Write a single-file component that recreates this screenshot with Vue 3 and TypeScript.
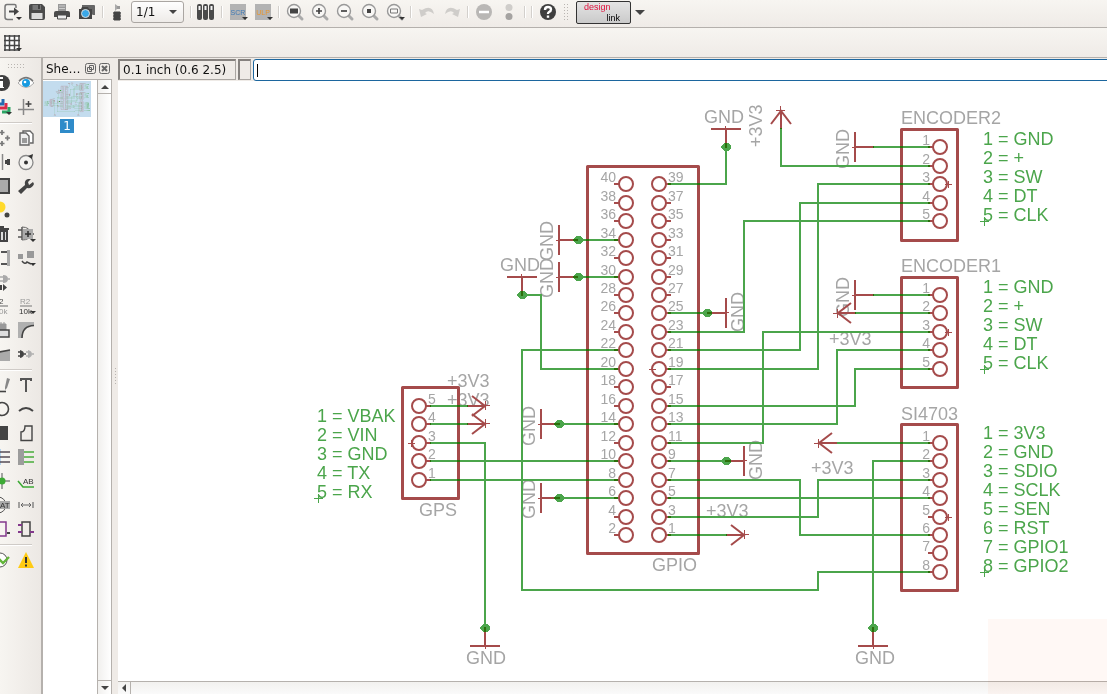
<script setup lang="ts">
import { ref } from 'vue'

type Dir = 'left' | 'right' | 'up' | 'down'
interface Tool { name: string; kind?: 'sep' | 'tool'; wide?: number; menu?: boolean }
interface Connector {
  title: string; titleX: number; titleY: number
  x: number; y: number; w: number; h: number
  pinX: number; side: 'left' | 'right'; pins: { n: number; y: number }[]
}

const command = ref('')
const sheet = ref('1/1')

const icons: Record<string, string> = {
  export: '<path d="M13 5V3Q13 1.500 11.500 1.500H4Q2 1.500 2 4V14Q2 16.500 4.500 16.500H10" fill="#f4f3f0" stroke="#777" stroke-width="1.500"/><path d="M6 7.500H11V4.500L16 8.500L11 12.500V9.500H6Z" fill="#444"/>',
  save: '<path d="M1 3Q1 1 3 1H14L17 4V15Q17 17 15 17H3Q1 17 1 15Z" fill="#4b4b4b"/><path d="M4.500 2H13V7H4.500Z" fill="#777"/><path d="M3.500 10H14.500V16H3.500Z" fill="#dcdcdc"/><path d="M10 2H12V6H10Z" fill="#444"/>',
  print: '<path d="M5 1H13V8H5Z" fill="#999"/><path d="M6 3H12M6 5.500H12" stroke="#ccc"/><path d="M1 10Q1 8 3 8H15Q17 8 17 10V14H1Z" fill="#4b4b4b"/><path d="M4.500 12H13.500V16H4.500Z" fill="#eee" stroke="#4b4b4b"/>',
  camera: '<path d="M4 5V2H16Q17 2 17 3V12H15" fill="#666"/><path d="M1 6H3L4 4H10L11 6H14V16H1Z" fill="#444"/><circle cx="7.500" cy="10.500" r="4" fill="#3aa8e8" stroke="#ddd"/>',
  chip: '<path d="M7 1L11 4L7 8Z" fill="#aaa"/><path d="M9 3H12V6H9Z" fill="#999"/><path d="M6 9H12V17H6ZM5 10H13M5 13H13M5 16H13" fill="#444" stroke="#444"/>',
  books: '<g fill="#4a4a4a"><rect x="0" y="1" width="5" height="16" rx="2"/><rect x="6" y="1" width="5" height="16" rx="2"/><rect x="12" y="1" width="5" height="16" rx="2"/></g><path d="M2.500 3V7M8.500 3V7M14.500 3V7" stroke="#f4f4f4" stroke-width="2"/>',
  scr: '<path d="M1 1H17V17H1Z" fill="#b3b3b3"/><text x="9" y="12" text-anchor="middle" font-family="Liberation Sans, sans-serif" font-size="7" fill="#3d78b4">SCR</text>',
  ulp: '<path d="M1 1H17V17H1Z" fill="#b3b3b3"/><text x="9" y="12" text-anchor="middle" font-family="Liberation Sans, sans-serif" font-size="7" fill="#e8962e">ULP</text>',
  grid: '<path d="M1 1H17V17H1Z" fill="#fff"/><path d="M2 1V17M6.500 1V17M11.500 1V17M16 1V17M1 2H17M1 6.500H17M1 11.500H17M1 16H17" stroke="#444" stroke-width="1.500"/>',
  undo: '<path d="M1 6L3 14L9 11L7 10Q10 6 16 11Q14 1 4 7Z" fill="#cfcdca"/>',
  redo: '<path d="M17 6L15 14L9 11L11 10Q8 6 2 11Q4 1 14 7Z" fill="#cfcdca"/>',
  stop: '<circle cx="9" cy="9" r="8" fill="#b9b7b5"/><path d="M4 9H14" stroke="#fff" stroke-width="2.500"/>',
  go: '<circle cx="9" cy="4.500" r="3.500" fill="#cfcdca"/><circle cx="9" cy="13.500" r="3.500" fill="#a5a3a1"/>',
  help: '<circle cx="9" cy="9" r="8" fill="#3f3f3f"/><path d="M6 7Q6 4 9 4Q12 4 12 6.500Q12 8 10 9Q9 9.500 9 11" fill="none" stroke="#fff" stroke-width="2.400"/><path d="M7.800 12.500H10.200V14.800H7.800Z" fill="#fff"/>',
  info: '<circle cx="9" cy="9" r="8" fill="#3f3f3f"/><path d="M7 3H10V5H7ZM6 7H10V13H11V14H6V13H7V8H6Z" fill="#fff"/>',
  eye: '<path d="M1 9Q9 -1 17 9Q9 18 1 9Z" fill="#fff" stroke="#aaa"/><path d="M2 7Q9 0 16 7" fill="none" stroke="#777" stroke-width="1.500"/><circle cx="9" cy="9" r="4" fill="#169ae0"/><circle cx="8" cy="8" r="1.300" fill="#fff"/>',
  layers: '<path d="M10 1V6H6" fill="none" stroke="#236bb0" stroke-width="3"/><path d="M13 5V10H7" fill="none" stroke="#d92b4a" stroke-width="3"/><path d="M16 9V14H9" fill="none" stroke="#2ca565" stroke-width="3"/>',
  mark: '<path d="M6.500 1V17M1 11.500H17" stroke="#888" stroke-width="1.500"/><path d="M11.500 3V9M8.500 6H14.500" stroke="#444" stroke-width="1.500"/>',
  move: '<path d="M9 1V6M6.500 3.500H11.500M9 12V17M6.500 14.500H11.500M14.500 6.500V11.500M12 9H17" stroke="#777" stroke-width="1.700"/>',
  copy: '<path d="M6 4V2H13L16 5V14H13" fill="#fff" stroke="#666" stroke-width="1.400"/><path d="M3 4H9L12 7V16H3Z" fill="#eee" stroke="#666" stroke-width="1.400"/><path d="M5 9H10V14H5Z" fill="#999"/>',
  mirror: '<path d="M9.500 1V17" stroke="#888" stroke-width="1.500"/><path d="M12 7H14V6H17V12H14V11H12Z" fill="#444"/>',
  rotate: '<circle cx="9" cy="9.500" r="7" fill="#f4f3f0" stroke="#888" stroke-width="1.300"/><circle cx="9" cy="9.500" r="2" fill="#333"/><path d="M11 3L16 1L15 6Z" fill="#333"/>',
  group: '<path d="M1 2H16V16H1Z" fill="#aaa" stroke="#444" stroke-width="2"/>',
  wrench: '<path d="M1 14L8 8Q7 3 11 2L14 2L11 5L12 8L16 5L17 7Q15 12 10 11L4 17Z" fill="#444"/>',
  paint: '<circle cx="7" cy="6" r="5.500" fill="#ffda2c"/><circle cx="14" cy="14" r="2.500" fill="#444"/>',
  trash: '<path d="M2 4H16M7 2H11" stroke="#444" stroke-width="2"/><path d="M4 6H14V16H4Z" fill="#ddd" stroke="#444" stroke-width="2"/><path d="M7 6V16M11 6V16" stroke="#444" stroke-width="2"/>',
  add: '<path d="M1 5H5M1 12H5M14 9H17M5 2V15" stroke="#555" stroke-width="1.500"/><path d="M5 2Q13 2 14 9Q13 15 5 15" fill="none" stroke="#666"/><path d="M6 4H16V14H6Z" fill="#aaa"/><path d="M11 6V12M8 9H14" stroke="#333" stroke-width="1.600"/>',
  pinswap: '<path d="M8 3H14M8 15H14" stroke="#555" stroke-width="2"/><path d="M14 1H17V17H14Z" fill="#aaa"/>',
  replace: '<path d="M1 5H6V10H1ZM10 2H17V9H10Z" fill="#999"/><path d="M5 12Q8 16 10 13L14 15" fill="none" stroke="#444" stroke-width="1.500"/>',
  gateswap: '<path d="M10 2Q15 2 15 6Q15 10 10 10Z" fill="#aaa"/><path d="M7 4H10M7 8H10M15 6H17" stroke="#aaa" stroke-width="1.500"/><path d="M7 12H9V17H7ZM10 11L14 14.500L10 18Z" fill="#444"/>',
  nameValue: '<text x="6" y="7" font-family="Liberation Sans, sans-serif" font-size="8" fill="#444">2</text><path d="M3 9H15" stroke="#666"/><text x="6" y="17" font-family="Liberation Sans, sans-serif" font-size="8" fill="#999">0k</text>',
  value: '<text x="3" y="7" font-family="Liberation Sans, sans-serif" font-size="8" fill="#999">R2</text><path d="M3 9H15" stroke="#777"/><text x="2" y="17" font-family="Liberation Sans, sans-serif" font-size="8" fill="#333">10k</text>',
  smash: '<path d="M4 3H13V12H4ZM5 1V4M8 1V4M11 1V4" fill="#999" stroke="#999"/><path d="M4 9H16V16H4" fill="#ddd" stroke="#444" stroke-width="1.500"/>',
  miter: '<path d="M1 1H17V4Q6 4 5 17H1Z" fill="#b0b0b0"/><path d="M5 17Q5 5 17 4.500" fill="none" stroke="#444" stroke-width="1.600"/>',
  split: '<path d="M1 8L17 5V16H1Z" fill="#aaa"/><path d="M1 8L17 5" stroke="#444" stroke-width="1.600"/>',
  invoke: '<path d="M3 5Q7 6 7 9Q7 12 3 13Z" fill="#444"/><path d="M1 7H4M1 11H4M7 9H9" stroke="#444" stroke-width="1.500"/><path d="M11 5Q15 6 15 9Q15 12 11 13Z" fill="#b0b0b0"/><path d="M9 7H12M9 11H12M15 9H17" stroke="#b0b0b0" stroke-width="1.500"/>',
  line: '<path d="M12 11L14 2L17 3L14 12L12 14Z" fill="#888"/><path d="M2 15.500H13" stroke="#444" stroke-width="1.600"/>',
  text: '<path d="M4 5V3H14V5M9 3V16" fill="none" stroke="#555" stroke-width="2"/>',
  circle: '<circle cx="9" cy="9" r="6.500" fill="none" stroke="#444" stroke-width="1.600"/>',
  arc: '<path d="M2 11Q9 5 16 11" fill="none" stroke="#444" stroke-width="2"/>',
  rect: '<path d="M1 2H15V16H1Z" fill="#444"/>',
  polygon: '<path d="M4 16.500V8Q8 8 8 2H15V16.500Z" fill="none" stroke="#444" stroke-width="1.400"/>',
  bus: '<path d="M4 1H8V17H4Z" fill="#b5d5f0"/><path d="M7 4H17M7 9H17M7 14H17" stroke="#554c55" stroke-width="1.600"/>',
  net: '<path d="M1 1H7V17H1Z" fill="#9c9c9c"/><path d="M7 4H17M7 9H17M7 14H17" stroke="#48ad3b" stroke-width="1.500"/>',
  junction: '<path d="M9 1V17M1 9H17" stroke="#888" stroke-width="1.500"/><circle cx="9" cy="9" r="3.500" fill="#3daa35"/>',
  label: '<path d="M1 9L6 15H17" fill="none" stroke="#3daa35" stroke-width="1.600"/><text x="6" y="12" font-family="Liberation Sans, sans-serif" font-size="8" fill="#333">AB</text>',
  attribute: '<circle cx="5" cy="9" r="8" fill="none" stroke="#555"/><path d="M6 5H17V13H6Z" fill="#aaa"/><text x="7" y="12" font-family="Liberation Sans, sans-serif" font-size="8" fill="#333">AT</text>',
  dimension: '<path d="M2 6V12M16 6V12" stroke="#777" stroke-width="1.300"/><path d="M4 9H14M6 7L4 9L6 11M12 7L14 9L12 11" fill="none" stroke="#666"/>',
  module: '<path d="M2 2H13V16H2Z" fill="none" stroke="#83388c" stroke-width="1.500"/><path d="M14 13H17" stroke="#444" stroke-width="2"/>',
  port: '<path d="M5 2H13V16H5Z" fill="none" stroke="#444" stroke-width="1.500"/><path d="M1 5H5M1 12H5M13 12H17" stroke="#83388c" stroke-width="2"/>',
  erc: '<circle cx="7" cy="9" r="7" fill="#fff" stroke="#555"/><path d="M6 8L10 12L16 6" fill="none" stroke="#62b53a" stroke-width="2.400"/>',
  warning: '<path d="M9 1L17 17H1Z" fill="#ffcb13"/><path d="M9 6V12" stroke="#333" stroke-width="2"/><path d="M8 13.500H10V15.500H8Z" fill="#333"/>',
}
const lens = (inner: string) =>
  '<path d="M12 12L16 16" stroke="#aaa" stroke-width="3" stroke-linecap="round"/><circle cx="8" cy="8" r="6.500" fill="#f8f7f5" stroke="#999" stroke-width="1.400"/>' + inner
icons.zoomFit = lens('<path d="M4 5.500H12V10.500H4Z" fill="#444"/>')
icons.zoomIn = lens('<path d="M5 8H11M8 5V11" stroke="#444" stroke-width="1.700"/>')
icons.zoomOut = lens('<path d="M5 8H11" stroke="#444" stroke-width="1.700"/>')
icons.redraw = lens('<path d="M6 6H10V10H6Z" fill="#444"/>')
icons.zoomSelect = lens('<path d="M4.500 6H11.500V10H4.500Z" fill="none" stroke="#777"/>')

const sep: Tool = { name: '', kind: 'sep' }
const fileTools: Tool[] = [
  { name: 'export', menu: true }, { name: 'save' }, { name: 'print' }, { name: 'camera' }, sep,
]
const mainTools: Tool[] = [
  sep, { name: 'books', wide: 24 }, sep, { name: 'scr', menu: true }, { name: 'ulp', menu: true }, sep,
  { name: 'zoomFit' }, { name: 'zoomIn' }, { name: 'zoomOut' }, { name: 'redraw' }, { name: 'zoomSelect', menu: true }, sep,
  { name: 'undo' }, { name: 'redo' }, sep, { name: 'stop' }, { name: 'go' }, sep, sep, { name: 'help' },
]
const palette: [string, string][][] = [
  [['info', 'eye'], ['layers', 'mark']],
  [['move', 'copy'], ['mirror', 'rotate'], ['group', 'wrench'], ['paint', ''], ['trash', 'add'], ['pinswap', 'replace'],
    ['gateswap', ''], ['nameValue', 'value'], ['smash', 'miter'], ['split', 'invoke']],
  [['line', 'text'], ['circle', 'arc'], ['rect', 'polygon'], ['bus', 'net'], ['junction', 'label'], ['attribute', 'dimension'], ['module', 'port']],
  [['erc', 'warning']],
]
const withMenu = ['layers', 'add', 'replace', 'value']

const rows = [184, 203, 221, 240, 258, 277, 295, 313, 332, 350, 369, 387, 406, 424, 443, 461, 480, 498, 517, 535]
const up = (ys: number[]) => ys.map((y, i) => ({ n: i + 1, y }))

const connectors: Connector[] = [
  { title: 'ENCODER2', titleX: 901, titleY: 124, x: 901, y: 129, w: 56, h: 111, pinX: 940, side: 'left', pins: up([147, 166, 184, 203, 221]) },
  { title: 'ENCODER1', titleX: 901, titleY: 272, x: 901, y: 277, w: 56, h: 110, pinX: 940, side: 'left', pins: up([295, 313, 332, 350, 369]) },
  { title: 'SI4703', titleX: 901, titleY: 420, x: 901, y: 424, w: 56, h: 166, pinX: 940, side: 'left', pins: up([443, 461, 480, 498, 517, 535, 553, 572]) },
  { title: 'GPS', titleX: 419, titleY: 516, x: 402, y: 387, w: 56, h: 111, pinX: 419, side: 'right', pins: up([480, 461, 443, 424, 406]) },
  { title: 'GPIO', titleX: 652, titleY: 571, x: 587, y: 166, w: 111, h: 387, pinX: 626, side: 'left', pins: rows.map((y, i) => ({ n: 40 - 2 * i, y })) },
  { title: '', titleX: 0, titleY: 0, x: 587, y: 166, w: 111, h: 387, pinX: 659, side: 'right', pins: rows.map((y, i) => ({ n: 39 - 2 * i, y })) },
]

const wires = [
  'M668 184H726V147', 'M578 240H618', 'M578 277H618', 'M522 295H541V369H618', 'M618 350H522V590H818V572H930',
  'M559 424H618', 'M559 498H618', 'M430 461H618', 'M430 480H618', 'M668 313H707', 'M668 332H744V221H930',
  'M668 350H800V203H930', 'M668 369H818V184H930', 'M668 406H855V369H930', 'M668 424H837V350H930',
  'M668 443H763V332H930', 'M668 461H726', 'M668 480H800V535H930', 'M668 498H930', 'M668 517H818V480H930',
  'M668 535H727', 'M873 147H930', 'M781 128V166H930', 'M873 295H930', 'M855 313H930', 'M837 443H930',
  'M930 461H873V628', 'M430 406H468', 'M430 424H468', 'M430 443H485V628',
].join('')

const junctions = [[726, 147], [578, 240], [578, 277], [522, 295], [559, 424], [559, 498], [707, 313], [726, 461], [873, 628], [485, 628]]
const junctionPath = junctions.map(([x, y]) => `M${x - 4} ${y - 2}l2 -2h4l3 3v2l-3 3h-4l-3 -3v-2z`).join('')

const grounds: [number, number, Dir][] = [
  [726, 129, 'down'], [559, 240, 'right'], [559, 277, 'right'], [522, 277, 'down'], [541, 424, 'right'], [541, 498, 'right'],
  [726, 313, 'left'], [744, 461, 'left'], [855, 147, 'right'], [855, 295, 'right'], [873, 646, 'up'], [485, 646, 'up'],
]
const supplies: [number, number, Dir][] = [
  [486, 406, 'left'], [486, 424, 'left'], [745, 535, 'left'], [837, 313, 'right'], [818, 443, 'right'], [781, 110, 'down'],
]
const turn: Record<Dir, number> = { right: 0, down: 90, left: 180, up: 270 }
const place = ([x, y, d]: [number, number, Dir]) => `translate(${x} ${y}) rotate(${turn[d]})`

const netNames: { t: string; x: number; y: number; r?: boolean }[] = [
  { t: 'GND', x: 704, y: 123 }, { t: 'GND', x: 500, y: 271 }, { t: 'GND', x: 466, y: 664 }, { t: 'GND', x: 855, y: 664 },
  { t: '+3V3', x: 447, y: 387 }, { t: '+3V3', x: 447, y: 406 }, { t: '+3V3', x: 706, y: 517 },
  { t: '+3V3', x: 829, y: 345 }, { t: '+3V3', x: 811, y: 474 },
  { t: '+3V3', x: 762, y: 147, r: true }, { t: 'GND', x: 849, y: 169, r: true }, { t: 'GND', x: 849, y: 317, r: true },
  { t: 'GND', x: 553, y: 261, r: true }, { t: 'GND', x: 553, y: 298, r: true }, { t: 'GND', x: 535, y: 446, r: true },
  { t: 'GND', x: 535, y: 519, r: true }, { t: 'GND', x: 744, y: 332, r: true }, { t: 'GND', x: 762, y: 480, r: true },
]
const origins = [[411, 443], [652, 369], [948, 184], [948, 332], [948, 517]]

const encoderPins = ['GND', '+', 'SW', 'DT', 'CLK']
const notes = [
  { x: 983, y: 145, pins: encoderPins },
  { x: 983, y: 293, pins: encoderPins },
  { x: 983, y: 439, pins: ['3V3', 'GND', 'SDIO', 'SCLK', 'SEN', 'RST', 'GPIO1', 'GPIO2'] },
  { x: 317, y: 422, pins: ['VBAK', 'VIN', 'GND', 'TX', 'RX'] },
]
</script>

<template>
  <div class="app">
    <header class="bar main-bar">
      <template v-for="(t, i) in fileTools" :key="i">
        <span v-if="t.kind === 'sep'" class="sep"></span>
        <button v-else class="tool" :aria-label="t.name">
          <svg class="icon" viewBox="0 0 18 18" v-html="icons[t.name]"></svg>
          <i v-if="t.menu" class="corner"></i>
        </button>
      </template>
      <button class="tool chip" aria-label="board">
        <svg class="icon" viewBox="0 0 18 18" v-html="icons.chip"></svg>
      </button>
      <div class="sheet-select">
        <select v-model="sheet" aria-label="Sheet"><option>1/1</option></select>
        <i class="arrow down"></i>
      </div>
      <template v-for="(t, i) in mainTools" :key="i">
        <span v-if="t.kind === 'sep'" class="sep"></span>
        <button v-else class="tool" :class="{ books: t.wide }" :aria-label="t.name">
          <svg class="icon" viewBox="0 0 18 18" v-html="icons[t.name]"></svg>
          <i v-if="t.menu" class="corner"></i>
        </button>
      </template>
      <span class="bar-grip"></span>
      <button class="design-link"><span class="design">design</span><span class="link">link</span></button>
      <button class="more" aria-label="more"><i class="arrow down"></i></button>
    </header>

    <div class="bar grid-bar">
      <button class="tool" aria-label="grid">
        <svg class="icon" viewBox="0 0 18 18" v-html="icons.grid"></svg>
        <i class="corner"></i>
      </button>
    </div>

    <div class="body">
      <nav class="palette">
        <span class="palette-grip"></span>
        <template v-for="(section, s) in palette" :key="s">
          <hr v-if="s" class="rule">
          <div class="section">
            <template v-for="(pair, p) in section" :key="p">
              <template v-for="(name, c) in pair" :key="c">
                <button v-if="name" class="cell" :aria-label="name">
                  <svg class="icon" viewBox="0 0 18 18" v-html="icons[name]"></svg>
                  <i v-if="withMenu.includes(name)" class="corner"></i>
                </button>
                <span v-else class="cell"></span>
              </template>
            </template>
          </div>
        </template>
      </nav>

      <aside class="sheets">
        <div class="sheets-head">
          <span class="sheets-title">She…</span>
          <button class="mini" aria-label="float">
            <svg viewBox="0 0 11 11"><rect x=".5" y=".5" width="10" height="10" rx="2" /><path d="M4.500 2.500H8.500V6.500H4.500ZM2.500 4.500H6.500V8.500H2.500Z" /></svg>
          </button>
          <button class="mini" aria-label="close">
            <svg viewBox="0 0 11 11"><rect x=".5" y=".5" width="10" height="10" rx="2" /><path d="M3 3L8 8M8 3L3 8" stroke-width="2" /></svg>
          </button>
        </div>
        <div class="sheets-body">
          <div class="sheet-list">
            <svg class="thumb" viewBox="300 80 774 600" preserveAspectRatio="xMidYMid meet">
              <use href="#schematic" />
            </svg>
            <span class="sheet-no">1</span>
          </div>
          <div class="vscroll">
            <button aria-label="scroll up"><i class="arrow up"></i></button>
            <span class="track"></span>
            <button aria-label="scroll down"><i class="arrow down"></i></button>
          </div>
        </div>
      </aside>

      <div class="splitter"><span></span></div>

      <main class="editor">
        <div class="params">
          <output class="coords">0.1 inch (0.6 2.5)</output>
          <span class="blank"></span>
          <div class="command">
            <span class="caret"></span>
            <input v-model="command" type="text" aria-label="Command">
          </div>
        </div>

        <div class="canvas">
          <svg class="drawing" role="img" aria-label="Schematic">
            <g transform="translate(-118 -81)">
              <g id="schematic">
                <g class="names">
                  <text v-for="(n, i) in netNames" :key="i" :transform="`translate(${n.x} ${n.y})` + (n.r ? ' rotate(-90)' : '')">{{ n.t }}</text>
                  <g v-for="(c, i) in connectors" :key="i">
                    <text v-if="c.title" :x="c.titleX" :y="c.titleY">{{ c.title }}</text>
                    <text
                      v-for="p in c.pins" :key="p.n" class="pin-no" :class="c.side"
                      :x="c.side === 'left' ? c.pinX - 10 : c.pinX + 9" :y="p.y - 2"
                    >{{ p.n }}</text>
                  </g>
                </g>
                <g id="symbols" class="symbols">
                  <g v-for="(c, i) in connectors" :key="i">
                    <rect v-if="c.title" class="box" :x="c.x + 0.5" :y="c.y + 0.5" :width="c.w" :height="c.h" />
                    <g v-for="p in c.pins" :key="p.n">
                      <circle :cx="c.pinX" :cy="p.y" r="7" />
                      <path :d="c.side === 'left' ? `M${c.pinX - 12} ${p.y}h5` : `M${c.pinX + 7} ${p.y}h5`" />
                    </g>
                  </g>
                  <g v-for="(g, i) in grounds" :key="i" :transform="place(g)">
                    <path d="M0 -15V15M0 0H19" />
                    <path class="hair" d="M-3 .5H4" />
                  </g>
                  <g v-for="(s, i) in supplies" :key="i" :transform="place(s)">
                    <path d="M0 0H19" />
                    <path class="slant" d="M14 -10L1 0L14 10" />
                    <path class="hair" d="M-4 .5H5M.5 -4V5" />
                  </g>
                  <path v-for="(o, i) in origins" :key="i" class="hair" :d="`M${o[0] - 3} ${o[1] + 0.5}h7M${o[0] + 0.5} ${o[1] - 3}v7`" />
                </g>
                <g class="wires">
                  <path :d="wires" />
                  <path class="junctions" :d="junctionPath" />
                  <g v-for="(n, i) in notes" :key="i">
                    <text v-for="(p, k) in n.pins" :key="k" :x="n.x" :y="n.y + k * 19">{{ k + 1 }} = {{ p }}</text>
                    <path class="hair" :d="`M${n.x - 3} ${n.y + (n.pins.length - 1) * 19 + 0.5}h9m-4.500 -4.500v9`" />
                  </g>
                </g>
                <mask id="on-symbols" class="alpha-mask" maskUnits="userSpaceOnUse" x="0" y="0" width="1200" height="800">
                  <use href="#symbols" />
                </mask>
                <g class="overlap" mask="url(#on-symbols)">
                  <path :d="wires" />
                  <path class="junctions" :d="junctionPath" />
                </g>
              </g>
            </g>
          </svg>
        </div>

        <div class="hscroll"><button aria-label="scroll left"><i class="arrow back"></i></button></div>
      </main>
    </div>
    <div class="tint"></div>
  </div>
</template>

<style>
body { margin: 0; overflow: hidden; }
</style>

<style scoped>
.app {
  position: relative;
  display: flex;
  flex-direction: column;
  height: 100vh;
  overflow: hidden;
  background: #efebe7;
  color: #111;
  font: 12px/16px "DejaVu Sans", sans-serif;
}
button { padding: 0; border: 0; background: none; font: inherit; color: inherit; }
.bar {
  display: flex;
  flex: none;
  align-items: center;
  box-sizing: border-box;
  background: linear-gradient(#f7f5f1, #efebe7);
  border-bottom: 1px solid #b4b0ac;
}
.main-bar { height: 28px; padding-bottom: 3px; }
.grid-bar { height: 30px; }
.tool {
  position: relative;
  display: flex;
  flex: none;
  align-items: center;
  justify-content: center;
  width: 25px;
  height: 24px;
}
.tool:first-child { margin-left: -1px; }
.chip { width: 22px; }
.books { width: 24px; }
.icon { display: block; width: 18px; height: 18px; overflow: visible; }
.corner {
  position: absolute;
  right: 2px;
  bottom: 4px;
  border: 3px solid transparent;
  border-top-color: #333;
  border-bottom: 0;
}
.sep { flex: none; width: 1px; height: 12px; margin: 0 3px; background: #d3d0cc; box-shadow: 1px 0 #fff; }
.sheet-select {
  position: relative;
  flex: none;
  box-sizing: border-box;
  width: 53px;
  height: 22px;
  margin: 0 3px;
  border: 1px solid #aaa6a2;
  border-radius: 3px;
  background: linear-gradient(#fefefe, #eeebe8);
}
.sheet-select select {
  display: block;
  width: 100%;
  height: 100%;
  padding: 0 0 0 4px;
  border: 0;
  background: none;
  appearance: none;
  font: inherit;
  color: inherit;
}
.sheet-select .arrow { position: absolute; right: 6px; top: 8px; pointer-events: none; }
.arrow { display: block; width: 0; height: 0; border: 4px solid transparent; }
.arrow.down { border-top-color: #444; border-bottom: 0; }
.arrow.up { border-bottom-color: #444; border-top: 0; }
.arrow.back { border-right-color: #444; border-left: 0; }
.bar-grip {
  flex: none;
  width: 5px;
  height: 18px;
  margin: 0 4px 0 3px;
  background: radial-gradient(circle, #b9b5b1 1px, transparent 1px) 0 0 / 3px 3px;
}
.design-link {
  display: flex;
  flex: none;
  flex-direction: column;
  box-sizing: border-box;
  width: 55px;
  height: 23px;
  margin-left: 4px;
  border: 1px solid #333;
  border-radius: 2px;
  background: linear-gradient(#e4e4e4, #cacaca);
  font: 9px/11px "Liberation Sans", sans-serif;
}
.design { align-self: flex-start; padding-left: 7px; color: #e0103c; }
.link { align-self: flex-end; padding-right: 10px; color: #000; }
.more { display: flex; justify-content: center; flex: none; width: 18px; }
.more .arrow { border-width: 5px 5px 0; }

.body { display: flex; flex: 1; min-height: 0; }
.palette {
  flex: none;
  box-sizing: border-box;
  width: 43px;
  overflow: hidden;
  border-right: 2px solid #b5b1ad;
  background: linear-gradient(90deg, #f7f5f1, #ece8e4);
}
.palette-grip {
  display: block;
  width: 17px;
  height: 6px;
  margin: 5px 0 2px 7px;
  background: radial-gradient(circle, #b9b5b1 1px, transparent 1px) 0 0 / 3px 3px;
}
.section { display: grid; grid-template-columns: 24px 24px; grid-auto-rows: 24px; margin-left: -10px; }
.cell { position: relative; display: flex; align-items: center; justify-content: center; }
.rule { height: 1px; margin: 3px 9px 3px 0; border: 0; background: #cfcbc7; box-shadow: 0 1px #fff; }

.sheets { display: flex; flex: none; flex-direction: column; width: 69px; }
.sheets-head { display: flex; flex: none; align-items: center; gap: 3px; height: 21px; padding-left: 3px; }
.sheets-title { flex: 1; white-space: nowrap; }
.mini { flex: none; width: 11px; height: 11px; }
.mini:last-child { margin-right: 2px; }
.mini svg { display: block; width: 11px; height: 11px; fill: none; stroke: #666; }
.sheets-body { display: flex; flex: 1; min-height: 0; background: #fff; border-top: 1px solid #b5b1ad; }
.sheet-list { display: flex; flex: 1; flex-direction: column; align-items: flex-start; gap: 2px; padding-top: 1px; }
.thumb { width: 48px; height: 36px; background: #c3dcee; }
.sheet-no { width: 14px; margin-left: 17px; background: #2f8bc9; color: #fff; line-height: 14px; text-align: center; }
.vscroll {
  display: flex;
  flex: none;
  flex-direction: column;
  width: 13px;
  border: solid #b5b1ad;
  border-width: 0 1px;
  background: linear-gradient(90deg, #f1f0ee, #fff);
}
.vscroll button { display: flex; align-items: center; justify-content: center; height: 13px; }
.track { flex: 1; border: solid #b5b1ad; border-width: 1px 0; }
.splitter { display: flex; flex: none; align-items: center; justify-content: center; width: 6px; }
.splitter span { width: 3px; height: 18px; background: radial-gradient(circle, #b9b5b1 1px, transparent 1px) 0 0 / 3px 3px; }

.editor { display: flex; flex: 1; flex-direction: column; min-width: 0; }
.params { display: flex; flex: none; gap: 2px; height: 23px; padding-top: 1px; box-sizing: border-box; }
.coords, .blank {
  box-sizing: border-box;
  height: 21px;
  border: 1px solid #aaa6a2;
  border-top: 2px solid #85817e;
  border-left: 2px solid #85817e;
}
.coords { width: 118px; padding-left: 3px; line-height: 18px; white-space: nowrap; }
.blank { width: 13px; }
.command {
  display: flex;
  flex: 1;
  align-items: center;
  box-sizing: border-box;
  margin-right: -4px;
  padding-left: 3px;
  border: 1px solid #1c669e;
  border-radius: 3px;
  background: #fff;
}
.caret { width: 1px; height: 13px; background: #000; }
.command input { flex: 1; min-width: 0; padding: 0; border: 0; outline: 0; background: none; font: inherit; }
.canvas { flex: 1; min-height: 0; background: #fff; }
.drawing { display: block; width: 100%; height: 100%; }
.hscroll {
  display: flex;
  flex: none;
  height: 12px;
  border-top: 1px solid #b5b1ad;
  background: linear-gradient(#f2f1ef, #fafafa);
}
.hscroll button { display: flex; align-items: center; justify-content: center; width: 13px; border-right: 1px solid #b5b1ad; }
.tint { position: absolute; right: 0; bottom: 0; width: 119px; height: 75px; background: #fff8f5; mix-blend-mode: multiply; pointer-events: none; }

#schematic text { font: 18px "Liberation Sans", Arial, sans-serif; }
#schematic .pin-no { font-size: 14px; }
.pin-no.left { text-anchor: end; }
.names { fill: #a5a5a5; }
.symbols { fill: none; stroke: #a54b4b; stroke-width: 2px; }
.symbols path, .wires path, .overlap path { shape-rendering: crispEdges; }
.symbols .slant { shape-rendering: auto; }
.symbols .box { stroke-width: 3px; stroke-linejoin: round; }
.symbols .hair, .wires .hair { stroke-width: 1px; }
.wires path { fill: none; stroke: #4ba54b; stroke-width: 2px; }
.wires .junctions { fill: #4ba54b; stroke: none; }
.wires text { fill: #4ba54b; }
.alpha-mask { mask-type: alpha; }
.overlap path { fill: none; stroke: #2b6e0a; stroke-width: 2px; }
.overlap .junctions { fill: #2b6e0a; stroke: none; }
</style>
